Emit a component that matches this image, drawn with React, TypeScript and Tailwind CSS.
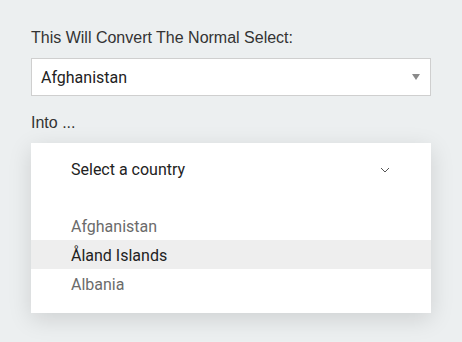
const countries = ['Afghanistan', 'Åland Islands', 'Albania'];

export default function App() {
  const active = 1;

  return (
    <div className="min-h-screen bg-[#eceff0] px-[31px] pt-[29px] font-['Roboto',sans-serif]">
      <p className="font-['Liberation_Sans',Arial,sans-serif] text-[16px] leading-[18px] text-[#333]">
        This Will Convert The Normal Select:
      </p>

      <div className="mt-[11px] flex h-[38px] w-[400px] items-center justify-between border border-[#cfcfcf] bg-white pl-[9px] pr-[9px]">
        <span className="pt-[1px] text-[16px] leading-[19px] text-[#222]">Afghanistan</span>
        <svg width="8" height="6" viewBox="0 0 8 6" className="mr-[1px]">
          <path d="M0 0h8L4 6z" fill="#8a8a8a" />
        </svg>
      </div>

      <p className="mt-[18px] font-['Liberation_Sans',Arial,sans-serif] text-[16px] leading-[18px] text-[#333]">
        Into ...
      </p>

      <div className="mt-[11px] w-[400px] bg-white pb-[15px] shadow-[0_6px_22px_rgba(0,0,0,0.13)]">
        <div className="flex items-center justify-between pl-[40px] pr-[41px] pt-[17px]">
          <span className="text-[16px] leading-[20px] text-[#222]">Select a country</span>
          <svg width="10" height="6" viewBox="0 0 10 6">
            <path d="M1 1l4 4 4-4" fill="none" stroke="#555" strokeWidth="1" />
          </svg>
        </div>

        <ul className="mt-[31px]">
          {countries.map((c, i) => (
            <li
              key={c}
              className={
                i === active
                  ? 'h-[29px] bg-[#eeeeee] pl-[40px] pt-[1px] text-[16px] leading-[29px] text-[#222]'
                  : 'h-[29px] pl-[40px] pt-[1px] text-[16px] leading-[29px] text-[#6b6b6b]'
              }
            >
              {c}
            </li>
          ))}
        </ul>
      </div>
    </div>
  );
}
